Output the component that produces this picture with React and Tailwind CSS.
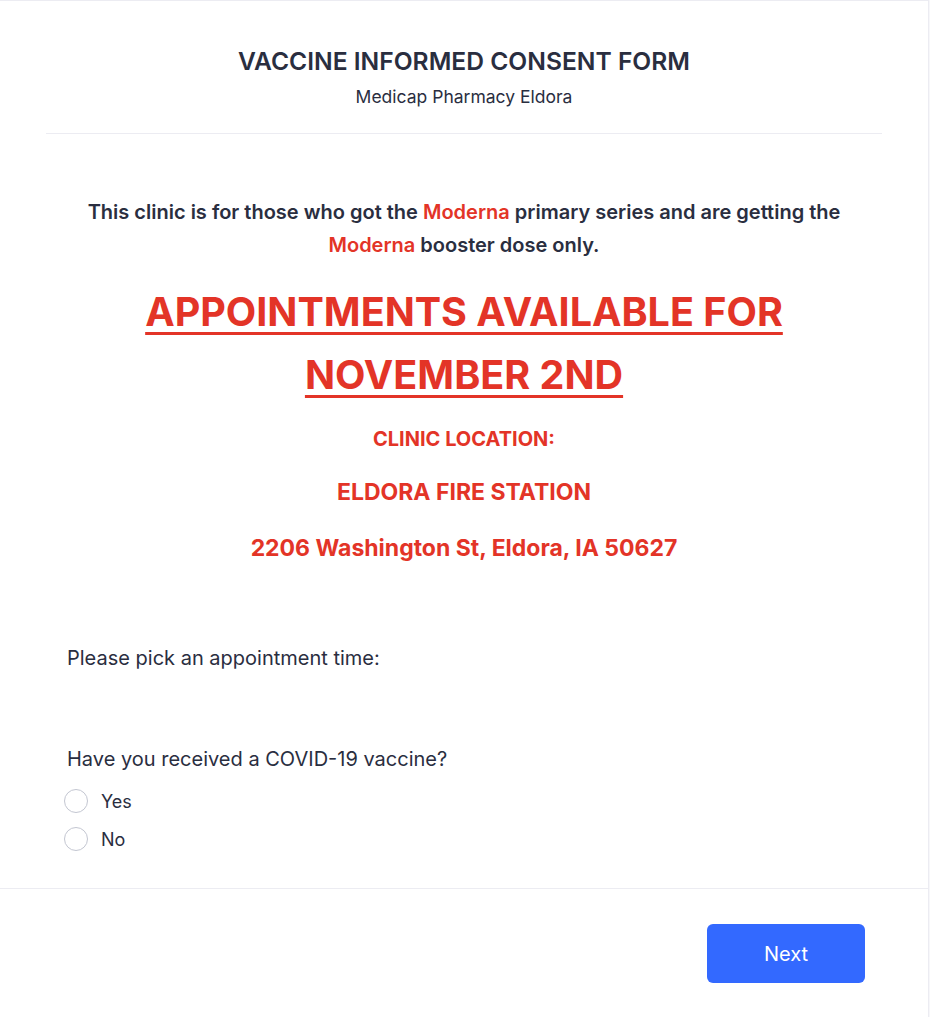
import { useState } from 'react';

function Radio({ label, checked, onChange }) {
  return (
    <label className="flex items-center gap-[13px] cursor-pointer h-[24px]">
      <span
        className={`w-[24px] h-[24px] rounded-full border ${checked ? 'border-[#3369ff] border-[7px]' : 'border-[#c3c6d1]'} bg-white`}
        onClick={onChange}
      />
      <span className="text-[18px] text-[#2a2e3f]">{label}</span>
    </label>
  );
}

export default function App() {
  const [answer, setAnswer] = useState(null);

  return (
    <div className="min-h-screen bg-[#f7f7fa] font-['Inter',sans-serif]">
      <div className="w-[929px] min-h-[1017px] bg-white border-t border-r border-[#ececf2] flex flex-col">
        {/* Header */}
        <header className="pt-[45px] mx-[46px] border-b border-[#ececf2] pb-[25px] text-center text-[#2a2e3f]">
          <h1 className="text-[24.6px] leading-[30px] font-semibold">VACCINE INFORMED CONSENT FORM</h1>
          <p className="mt-[10px] text-[17.5px] leading-[22px]">Medicap Pharmacy Eldora</p>
        </header>

        {/* Main Content */}
        <main className="flex-1 px-[67px] pt-[62px]">
          <div className="text-center">
            <p className="text-[20px] leading-[33px] font-semibold text-[#2a2e3f] px-[8px]">
              This clinic is for those who got the <span className="text-[#e33427]">Moderna</span> primary series and are getting the{' '}
              <span className="text-[#e33427]">Moderna</span> booster dose only.
            </p>
            <h2 className="mt-[19px] text-[39.5px] leading-[63px] font-bold text-[#e33427] underline decoration-[3px] underline-offset-[6px] px-[70px]">
              APPOINTMENTS AVAILABLE FOR NOVEMBER 2ND
            </h2>
            <p className="mt-[20px] text-[20px] leading-[24px] font-bold text-[#e33427]">CLINIC LOCATION:</p>
            <p className="mt-[27px] text-[23px] leading-[28px] font-bold text-[#e33427]">ELDORA FIRE STATION</p>
            <p className="mt-[27px] text-[23px] leading-[30px] font-bold text-[#e33427]">2206 Washington St, Eldora, IA 50627</p>
          </div>

          <p className="mt-[83px] text-[20px] leading-[24px] text-[#2a2e3f]">Please pick an appointment time:</p>

          <p className="mt-[77px] text-[20px] leading-[24px] text-[#2a2e3f]">Have you received a COVID-19 vaccine?</p>
          <div className="mt-[18px] -ml-[3px] flex flex-col gap-[14px] pb-[28px]">
            <Radio label="Yes" checked={answer === 'yes'} onChange={() => setAnswer('yes')} />
            <Radio label="No" checked={answer === 'no'} onChange={() => setAnswer('no')} />
          </div>
        </main>

        {/* Footer */}
        <footer className="border-t border-[#ececf2] flex justify-end pt-[35px] pb-[34px] pr-[63px]">
          <button className="w-[158px] h-[59px] rounded-[6px] bg-[#3369ff] text-white text-[20px]">Next</button>
        </footer>
      </div>
    </div>
  );
}
